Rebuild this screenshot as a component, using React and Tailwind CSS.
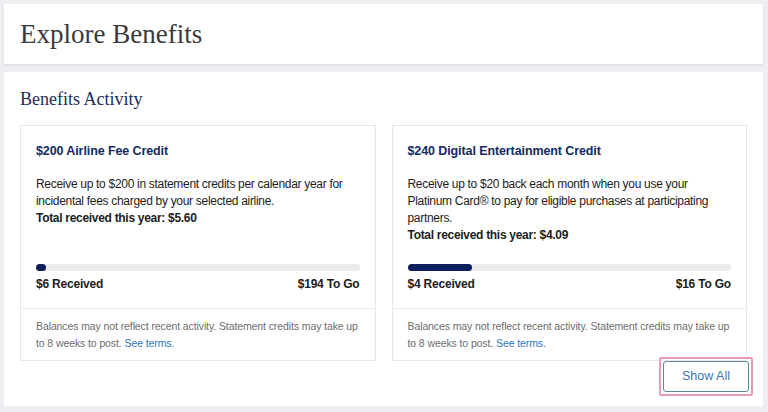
const benefits = [
  {
    title: '$200 Airline Fee Credit',
    body: 'Receive up to $200 in statement credits per calendar year for incidental fees charged by your selected airline.',
    total: '$5.60',
    received: '$6 Received',
    toGo: '$194 To Go',
    pct: 3,
  },
  {
    title: '$240 Digital Entertainment Credit',
    body: 'Receive up to $20 back each month when you use your Platinum Card® to pay for eligible purchases at participating partners.',
    total: '$4.09',
    received: '$4 Received',
    toGo: '$16 To Go',
    pct: 20,
  },
];

function BenefitCard({ benefit }) {
  return (
    <div className="flex flex-col border border-[#e7e8ea] bg-white">
      <div className="flex flex-1 flex-col px-[15px] pt-[17px] pb-[15px]">
        <h3 className="text-[12.5px] font-bold leading-[17px] tracking-[-0.1px] text-[#152a5e]">{benefit.title}</h3>
        <p className="mt-[16px] pr-[8px] text-[12px] leading-[17px] tracking-[-0.3px] text-[#1c1c1c]">{benefit.body}</p>
        <p className="text-[12px] font-bold leading-[17px] tracking-[-0.3px] text-[#1c1c1c]">
          Total received this year: {benefit.total}
        </p>
        <div className="mt-auto">
          <div className="h-[7px] w-full rounded-full bg-[#ebebeb]">
            <div
              className="h-full min-w-[8px] rounded-full bg-[#0c1e5b]"
              style={{ width: `${benefit.pct}%` }}
            />
          </div>
          <div className="mt-[5px] flex justify-between text-[12px] font-bold leading-[17px] tracking-[-0.2px] text-[#1c1c1c]">
            <span>{benefit.received}</span>
            <span>{benefit.toGo}</span>
          </div>
        </div>
      </div>
      <div className="border-t border-[#ececec] px-[15px] pt-[9px] pb-[8px] text-[10.5px] leading-[17px] tracking-[-0.1px] text-[#6d6d6d]">
        Balances may not reflect recent activity. Statement credits may take up to 8 weeks to post.{' '}
        <a className="text-[#2b76bb]">See terms.</a>
      </div>
    </div>
  );
}

export default function App() {
  return (
    <div
      className="flex h-[412px] w-[768px] flex-col gap-2 bg-[#eceef1] pt-1 pr-[5px] pb-[6px] pl-1"
      style={{ fontFamily: '"Liberation Sans", Arial, sans-serif' }}
    >
      <header className="flex h-[60px] shrink-0 items-center bg-white px-4 shadow-[0_1px_2px_rgba(0,0,0,0.08)]">
        <h1 className="pt-[1px] font-['Liberation_Serif',serif] text-[27px] leading-none text-[#3a3a3a]">Explore Benefits</h1>
      </header>
      <main className="flex flex-1 flex-col bg-white px-4 pt-[17px]">
        <h2 className="font-['Liberation_Serif',serif] text-[18px] leading-[20px] text-[#1d2c5c]">Benefits Activity</h2>
        <div className="mt-[16px] grid h-[236px] grid-cols-2 gap-4">
          {benefits.map((b) => (
            <BenefitCard key={b.title} benefit={b} />
          ))}
        </div>
        <div className="-mt-[4px] -mr-[6px] flex justify-end">
          <div className="rounded-[2px] border-2 border-[#e79bbd] p-[2px]">
            <button
              type="button"
              className="block h-[31px] w-[86px] rounded-[3px] border border-[#5e8796] bg-white text-[12.5px] text-[#3b78b6]"
            >
              Show All
            </button>
          </div>
        </div>
      </main>
    </div>
  );
}
